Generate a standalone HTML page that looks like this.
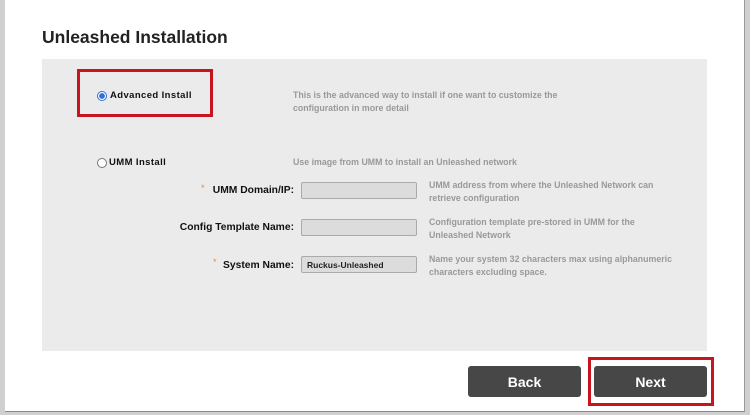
<!DOCTYPE html>
<html><head><style>
body{margin:0;width:750px;height:415px;background:#d0d0d0;position:relative;overflow:hidden;font-family:"Liberation Sans",Arial,sans-serif}
.page{position:absolute;left:5px;top:0;width:739px;height:411px;background:#fff;border-right:1px solid #999;border-bottom:1px solid #888}
.a{position:absolute}
h1{position:absolute;left:42px;top:27px;margin:0;font-size:17.5px;font-weight:bold;color:#222}
.panel{position:absolute;left:42px;top:59px;width:665px;height:292px;background:#ebebeb}
.lbl{font-size:9.5px;font-weight:bold;color:#111;letter-spacing:0.4px}
.desc{font-size:8.8px;color:#999;font-weight:bold;line-height:13px}
.fl{font-size:10.3px;font-weight:bold;color:#111;text-align:right;width:200px}
.in{width:116px;height:17px;background:#dcdcdc;border:1px solid #aaa;border-radius:2px;font-size:8.5px;font-weight:bold;color:#222;line-height:16px;padding-left:5px;box-sizing:border-box}
.radio{width:10px;height:10px;border-radius:50%;border:1px solid #777;background:#fff;box-sizing:border-box}
.btn{width:113px;height:31px;background:#474747;border-radius:3px;color:#fff;font-weight:bold;font-size:14px;text-align:center;line-height:32px}
.red{border:3px solid #c8141c;box-sizing:border-box}
.st{color:#e08a40;font-size:9px}
</style></head><body>
<div class="page"></div>
<h1>Unleashed Installation</h1>
<div class="panel"></div>
<div class="a red" style="left:77px;top:69px;width:136px;height:48px"></div>
<div class="a radio" style="left:97px;top:91px;border:1px solid #2f6fd6;background:radial-gradient(circle,#2f6fd6 0 2.6px,#fff 3.1px)"></div>
<div class="a lbl" style="left:110px;top:90px">Advanced Install</div>
<div class="a desc" style="left:293px;top:89px;width:300px">This is the advanced way to install if one want to customize the configuration in more detail</div>
<div class="a radio" style="left:97px;top:158px"></div>
<div class="a lbl" style="left:109px;top:157px">UMM Install</div>
<div class="a desc" style="left:293px;top:156px">Use image from UMM to install an Unleashed network</div>

<div class="a st" style="left:201px;top:183px">*</div>
<div class="a fl" style="left:94px;top:185px">UMM Domain/IP:</div>
<div class="a in" style="left:301px;top:182px"></div>
<div class="a desc" style="left:429px;top:179px;width:235px">UMM address from where the Unleashed Network can retrieve configuration</div>

<div class="a fl" style="left:94px;top:222px">Config Template Name:</div>
<div class="a in" style="left:301px;top:219px"></div>
<div class="a desc" style="left:429px;top:216px;width:225px">Configuration template pre-stored in UMM for the Unleashed Network</div>

<div class="a st" style="left:213px;top:257px">*</div>
<div class="a fl" style="left:94px;top:260px">System Name:</div>
<div class="a in" style="left:301px;top:256px">Ruckus-Unleashed</div>
<div class="a desc" style="left:429px;top:253px;width:275px">Name your system 32 characters max using alphanumeric characters excluding space.</div>

<div class="a btn" style="left:468px;top:366px">Back</div>
<div class="a red" style="left:588px;top:357px;width:126px;height:49px"></div>
<div class="a btn" style="left:594px;top:366px">Next</div>
</body></html>
